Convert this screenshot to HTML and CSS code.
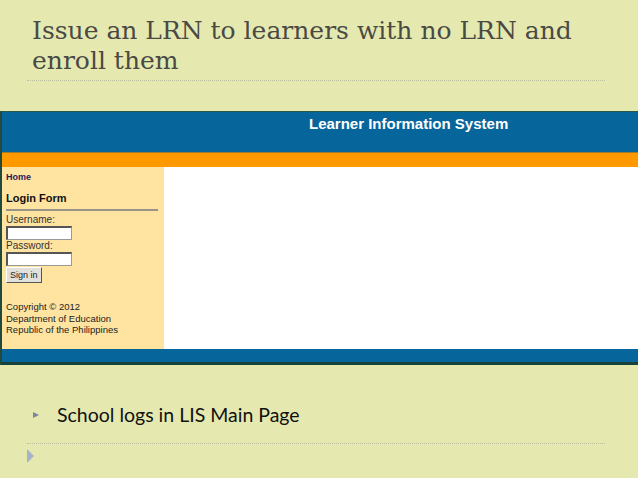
FILE: index.html
```html
<!DOCTYPE html>
<html>
<head>
  <meta charset="utf-8">
  <title>Issue an LRN</title>
  <link rel="stylesheet" href="styles.css">
</head>
<body>
  <div class="slide">
    <div class="slide-head">
      <h1>Issue an LRN to learners with no LRN and enroll them</h1>
    </div>

    <div class="lis">
      <div class="lis-top">Learner Information System</div>
      <div class="lis-bar"></div>
      <div class="lis-main">
        <div class="side">
          <a class="home" href="#">Home</a>
          <h2>Login Form</h2>
          <form class="login">
            <label for="user">Username:</label>
            <input type="text" id="user">
            <label for="pass">Password:</label>
            <input type="password" id="pass">
            <button type="button">Sign in</button>
          </form>
          <div class="copy">
            Copyright &copy; 2012<br>
            Department of Education<br>
            Republic of the Philippines
          </div>
        </div>
        <div class="content"></div>
      </div>
      <div class="lis-foot"></div>
    </div>

    <ul class="points">
      <li>School logs in LIS Main Page</li>
    </ul>
    <div class="slide-foot"><span class="arrow"></span></div>
  </div>
</body>
</html>
```

FILE: styles.css
```css
body {
  margin: 0;
  background-color: #e5e9b0;
}

.slide {
  width: 638px;
  height: 478px;
  overflow: hidden;
}

.slide-head {
  height: 111px;
  padding: 16px 32px 0 27px;
  box-sizing: border-box;
}

.slide-head h1 {
  margin: 0;
  width: 573px;
  padding: 0 0 4px 5px;
  border-bottom: 1px dotted #b9c0a0;
  font-family: "DejaVu Serif", serif;
  font-weight: normal;
  font-size: 25px;
  line-height: 30px;
  color: #4a4a45;
}

.lis {
  border-top: 1px solid #2d5a48;
  border-left: 2px solid #1f4a3c;
  font-family: "Liberation Sans", Arial, sans-serif;
}

.lis-top {
  height: 40px;
  background-color: #06659a;
  color: #fff;
  font-weight: bold;
  font-size: 15px;
  padding: 3px 0 0 307px;
  box-sizing: border-box;
}

.lis-bar {
  height: 15px;
  background-color: #fe9900;
  border-top: 1px solid #9a7a30;
  box-sizing: border-box;
}

.lis-main {
  display: flex;
  height: 182px;
}

.side {
  width: 162px;
  background-color: #ffe3a0;
  padding: 5px 6px 0 4px;
  box-sizing: border-box;
  font-size: 10px;
  color: #222;
}

.home {
  display: block;
  color: #2a1a5e;
  font-weight: bold;
  font-size: 9px;
  text-decoration: none;
}

.side h2 {
  margin: 10px 0 0 0;
  font-size: 11px;
  color: #111;
  padding-bottom: 5px;
  border-bottom: 2px solid #999488;
}

.login {
  display: flex;
  flex-direction: column;
  align-items: flex-start;
  margin-top: 3px;
}

.login label {
  line-height: 11px;
  color: #333;
}

.login input {
  width: 66px;
  height: 14px;
  box-sizing: border-box;
  border: 1px solid #999;
  border-top: 2px solid #555;
  border-left: 2px solid #555;
  background: #fff;
  margin: 1px 0 0 0;
  padding: 0;
}

.login button {
  margin-top: 1px;
  font-family: "Liberation Sans", Arial, sans-serif;
  font-size: 9px;
  height: 16px;
  padding: 0 3px;
  background-color: #e2e0da;
  border: 1px solid #fff;
  border-right: 1px solid #555;
  border-bottom: 1px solid #555;
  color: #222;
}

.copy {
  margin-top: 18px;
  font-size: 9.5px;
  line-height: 11.5px;
  color: #222;
}

.content {
  flex: 1;
  background-color: #fff;
}

.lis-foot {
  height: 16px;
  background-color: #06659a;
  border-bottom: 3px solid #16423a;
  box-sizing: border-box;
}

.points {
  list-style: none;
  margin: 38px 0 0 0;
  padding: 0 0 0 33px;
  font-family: "Lato", "Open Sans", sans-serif;
  font-size: 19.5px;
  color: #111;
}

.points li {
  display: flex;
  align-items: center;
  gap: 18px;
}

.points li::before {
  content: "";
  border-left: 6px solid #7a86a0;
  border-top: 3px solid transparent;
  border-bottom: 3px solid transparent;
}

.slide-foot {
  margin: 17px 0 0 27px;
  width: 578px;
  border-top: 1px dotted #b9c0a0;
  padding-top: 5px;
}

.arrow {
  display: block;
  width: 0;
  border-left: 7px solid #a3b5c9;
  border-top: 7px solid transparent;
  border-bottom: 7px solid transparent;
}
```
